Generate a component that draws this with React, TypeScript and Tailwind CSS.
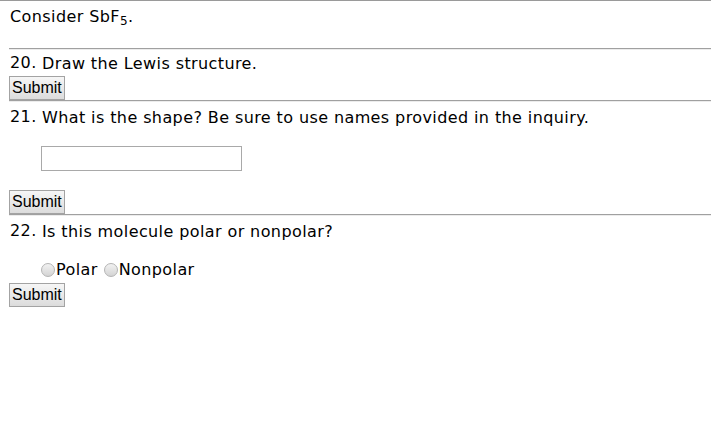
import React from "react"

function Rule() {
  return <div className="h-[2px] border-t border-[#a0a0a0] bg-[#ececec]" />
}

function SubmitButton({ className = "" }: { className?: string }) {
  return (
    <button
      type="button"
      className={
        "block h-[24px] px-[2px] border border-[#a3a3a3] bg-gradient-to-b from-[#f6f6f6] to-[#dcdcdc] text-[16px] leading-[20px] tracking-normal text-black font-['Liberation_Sans',Arial,sans-serif] " +
        className
      }
    >
      Submit
    </button>
  )
}

function Question({ num, children }: { num: number; children: React.ReactNode }) {
  return (
    <div className="flex leading-[20px]">
      <span className="w-[33px] shrink-0 pl-[1px] -translate-y-[1px]">{num}.</span>
      <span>{children}</span>
    </div>
  )
}

function Radio({ label }: { label: string }) {
  return (
    <label className="flex items-center">
      <input
        type="radio"
        name="polarity"
        className="appearance-none w-[14px] h-[14px] rounded-full border border-[#b4b4b4] bg-gradient-to-b from-[#f2f2f2] to-[#d4d4d4] m-0"
      />
      <span className="ml-[1px]">{label}</span>
    </label>
  )
}

export default function App() {
  return (
    <div className="w-[711px] h-[426px] bg-white text-black text-[16px] font-['DejaVu_Sans',Verdana,sans-serif] tracking-[0.4px]">
      <div className="h-px bg-[#9a9a9a]" />
      <div className="pl-[9px]">
        <p className="mt-[6px] leading-[20px] pl-[1px]">
          Consider SbF<sub>5</sub>.
        </p>
        <div className="mt-[21px]">
          <Rule />
        </div>

        {/* 20 */}
        <div className="mt-[4px]">
          <Question num={20}>Draw the Lewis structure.</Question>
        </div>
        <SubmitButton className="mt-[2px]" />
        <Rule />

        {/* 21 */}
        <div className="mt-[6px]">
          <Question num={21}>What is the shape? Be sure to use names provided in the inquiry.</Question>
        </div>
        <input
          type="text"
          className="block mt-[18px] ml-[32px] w-[201px] h-[25px] border border-[#a9a9a9] bg-white outline-none"
        />
        <SubmitButton className="mt-[19px]" />
        <Rule />

        {/* 22 */}
        <div className="mt-[6px]">
          <Question num={22}>Is this molecule polar or nonpolar?</Question>
        </div>
        <div className="mt-[18px] ml-[32px] flex gap-[6px] leading-[20px]">
          <Radio label="Polar" />
          <Radio label="Nonpolar" />
        </div>
        <SubmitButton className="mt-[3px]" />
      </div>
    </div>
  )
}
